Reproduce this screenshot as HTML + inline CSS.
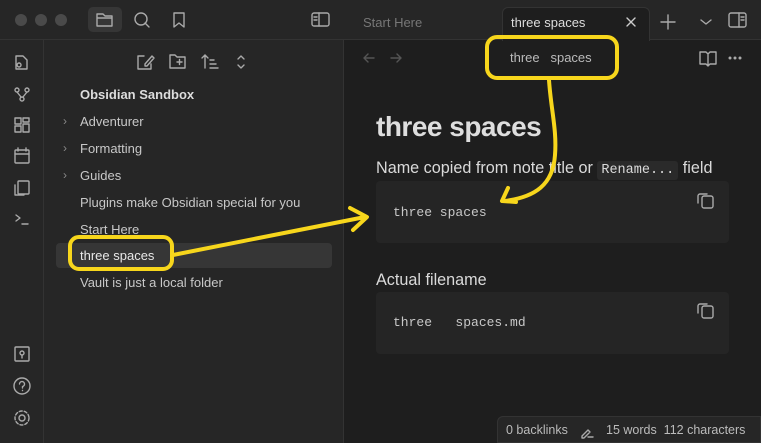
<!DOCTYPE html><html><head><style>
*{margin:0;padding:0;box-sizing:border-box}
body{width:761px;height:443px;overflow:hidden;background:#1e1e1e;font-family:"Liberation Sans",sans-serif;position:relative;color:#dadada}
.abs{position:absolute}
.ribbon{left:0;top:0;width:44px;height:443px;background:#262626;border-right:1px solid #333}
.side{left:44px;top:0;width:300px;height:443px;background:#262626;border-right:1px solid #333}
.top{left:0;top:0;width:344px;height:40px;background:#262626;border-bottom:1px solid #333}
.tabbar{left:344px;top:0;width:417px;height:40px;background:#262626;border-bottom:1px solid #333}
.dot{width:12px;height:12px;border-radius:6px;background:#4a4a4a;top:14px}
.item{left:80px;font-size:13px;color:#c8c8c8}
.chev{left:63px;font-size:12px;color:#888}
.mono{font-family:"Liberation Mono",monospace}
.code{left:376px;width:353px;background:#252525;border-radius:4px}
svg{position:absolute}
</style></head><body>
<div class="abs ribbon"></div>
<div class="abs side"></div>
<div class="abs top"></div>
<div class="abs tabbar"></div>
<div class="abs dot" style="left:15px"></div><div class="abs dot" style="left:35px"></div><div class="abs dot" style="left:55px"></div>
<div class="abs" style="left:88px;top:7px;width:34px;height:25px;background:#363636;border-radius:5px"></div>
<div class="abs" style="left:363px;top:15px;font-size:13px;color:#777">Start Here</div>
<div class="abs" style="left:502px;top:7px;width:148px;height:34px;background:#1e1e1e;border:1px solid #333;border-bottom:none;border-radius:6px 6px 0 0"></div>
<div class="abs" style="left:511px;top:15px;font-size:13px;color:#ddd">three spaces</div>
<div class="abs code" style="top:181px;height:62px"></div>
<div class="abs code" style="top:292px;height:62px"></div>
<div class="abs" style="left:497px;top:416px;width:264px;height:27px;background:#262626;border:1px solid #333;border-radius:6px 0 0 0"></div>
<svg width="761" height="443" style="left:0;top:0" fill="none" stroke="#aaa" stroke-width="1.4" stroke-linecap="round" stroke-linejoin="round">
<path d="M97 14h6l2 2h7v10h-15z M97 18h15"/>
<circle cx="141" cy="19" r="6"/><path d="M145 23l4 4"/>
<path d="M174 13h10v14l-5-4-5 4z"/>
<rect x="312" y="13" width="17" height="13" rx="2"/><path d="M319 13v13 M314 17h3 M314 20h3"/>
<path d="M16 56h7l4 4v9h-11z M19 63a2 2 0 1 0 .1 0" />
<circle cx="17" cy="90" r="2"/><circle cx="27" cy="90" r="2"/><circle cx="22" cy="99" r="2"/><path d="M17 92l4 5 M27 92l-4 5"/>
<rect x="15" y="118" width="6" height="6"/><rect x="23" y="118" width="6" height="4"/><rect x="15" y="126" width="6" height="6"/><rect x="23" y="124" width="6" height="8"/>
<rect x="15" y="150" width="14" height="13" rx="1"/><path d="M15 154h14 M18 148v3 M26 148v3"/>
<rect x="18" y="181" width="11" height="13" rx="1"/><path d="M15 185v10h9"/>
<path d="M16 215l4 3-4 3 M22 224h6"/>
<rect x="15" y="347" width="14" height="14" rx="1"/><circle cx="22" cy="353" r="2"/><path d="M22 355v3"/>
<circle cx="22" cy="386" r="8"/><path d="M19.5 384a2.5 2.5 0 1 1 3 2.5v1.5 M22.5 390.5v.1"/>
<circle cx="22" cy="418" r="3"/><circle cx="22" cy="418" r="7" stroke-dasharray="3 2"/>
<path d="M139 56h5 M138 56v13h13v-5 M145 64l7-8 2 2-7 8h-2z"/>
<path d="M170 55h5l2 2h8v11h-15z M177 62h5 M179.5 59.5v5"/>
<path d="M205 68v-13 M202 58l3-3 3 3 M210 60h4 M210 64h6 M210 68h8"/>
<path d="M238 59l3-3 3 3 M238 65l3 3 3-3"/>
<path d="M627 18l8 8 M635 18l-8 8" stroke="#ccc"/>
<path d="M668 15v14 M661 22h14" stroke="#aaa"/>
<path d="M701 20l5 4 5-4"/>
<rect x="729" y="13" width="17" height="14" rx="2"/><path d="M739 13v14 M741 17h3 M741 20h3"/>
<path d="M374 58h-9 M368 54l-4 4 4 4 M391 58h9 M397 54l4 4-4 4" stroke="#555"/>
<path d="M700 52h6l2 2 2-2h6v12h-6l-2 2-2-2h-6z M708 54v11"/>
<circle cx="730" cy="58" r=".8" fill="#aaa"/><circle cx="735" cy="58" r=".8" fill="#aaa"/><circle cx="740" cy="58" r=".8" fill="#aaa"/>
<rect x="702" y="196" width="11" height="12" rx="2"/><path d="M698 203v-7a2 2 0 0 1 2-2h7"/>
<rect x="702" y="306" width="11" height="12" rx="2"/><path d="M698 313v-7a2 2 0 0 1 2-2h7"/>
<path d="M582 436l6-6 2 2-6 6h-2z M588 437h5"/>
</svg>
<div class="abs" style="left:80px;top:87px;font-size:13px;font-weight:bold;color:#ddd">Obsidian Sandbox</div>
<div class="abs chev" style="top:114px">›</div><div class="abs item" style="top:114px">Adventurer</div>
<div class="abs chev" style="top:141px">›</div><div class="abs item" style="top:141px">Formatting</div>
<div class="abs chev" style="top:168px">›</div><div class="abs item" style="top:168px">Guides</div>
<div class="abs item" style="top:195px">Plugins make Obsidian special for you</div>
<div class="abs item" style="top:222px">Start Here</div>
<div class="abs" style="left:56px;top:243px;width:276px;height:25px;background:#363636;border-radius:4px"></div>
<div class="abs item" style="top:248px;color:#e8e8e8">three spaces</div>
<div class="abs item" style="top:275px">Vault is just a local folder</div>
<div class="abs" style="left:510px;top:50px;font-size:13px;color:#bbb;white-space:pre">three   spaces</div>
<div class="abs" style="left:376px;top:111px;font-size:28px;font-weight:bold;color:#dedede;letter-spacing:-.5px">three spaces</div>
<div class="abs" style="left:376px;top:159px;font-size:16.2px;color:#dadada">Name copied from note title or <span class="mono" style="background:#2a2a2a;font-size:13.5px;padding:2px 4px;border-radius:3px">Rename...</span> field</div>
<div class="abs mono" style="left:393px;top:205px;font-size:13px;color:#c8c8c8">three spaces</div>
<div class="abs" style="left:376px;top:271px;font-size:16.2px;color:#dadada">Actual filename</div>
<div class="abs mono" style="left:393px;top:315px;font-size:13px;color:#c8c8c8;white-space:pre">three   spaces.md</div>
<div class="abs" style="left:506px;top:423px;font-size:12.5px;color:#bbb">0 backlinks</div>
<div class="abs" style="left:606px;top:423px;font-size:12.5px;color:#bbb">15 words&nbsp; 112 characters</div>
<svg width="761" height="443" style="left:0;top:0" fill="none" stroke="#f7d61c" stroke-width="4" stroke-linecap="round" stroke-linejoin="round">
<rect x="70" y="237" width="102" height="32" rx="9"/>
<rect x="487" y="37" width="130" height="41" rx="10"/>
<path d="M173 255L365 217 M350 208l17 9-14 13"/>
<path d="M549 80c2 30 8 50 6 75c-2 30-20 42-50 46 M508 188l-6 13 14 1"/>
</svg>
</body></html>
